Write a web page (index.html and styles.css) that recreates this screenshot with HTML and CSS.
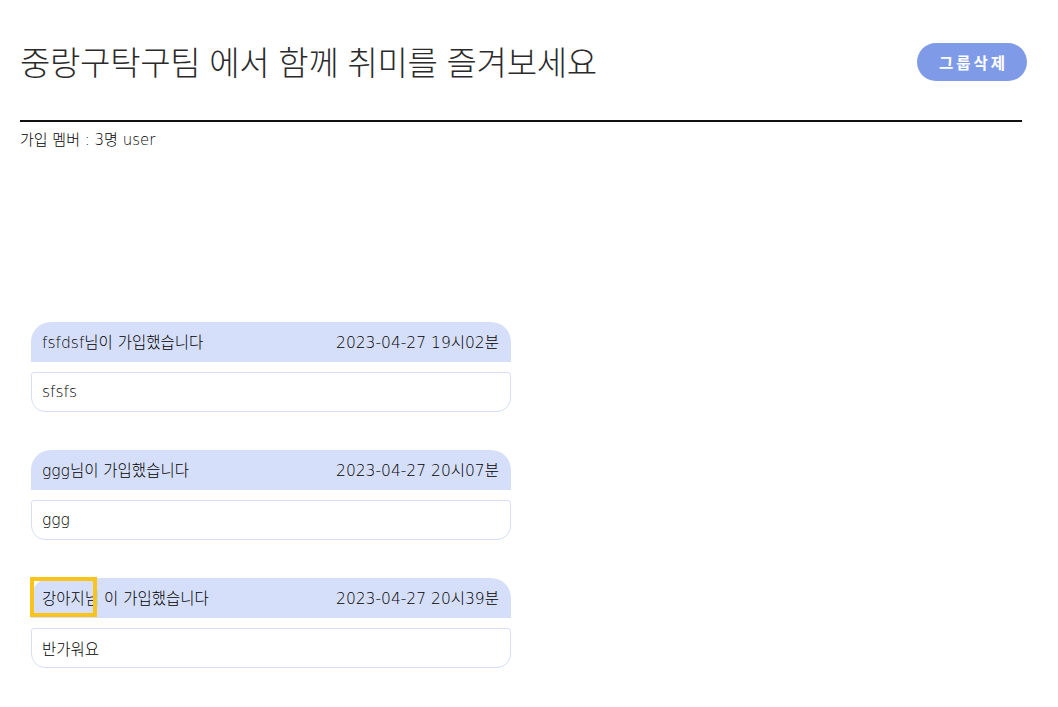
FILE: index.html
```html
<!DOCTYPE html>
<html lang="ko">
<head>
<meta charset="utf-8">
<link rel="stylesheet" href="styles.css">
</head>
<body>
<div class="page">
  <header class="top">
    <h1 class="title">중랑구탁구팀 에서 함께 취미를 즐겨보세요</h1>
    <button class="delete-btn">그룹삭제</button>
  </header>
  <div class="rule"></div>
  <p class="members">가입 멤버 : 3명 user</p>

  <section class="feed">
    <article class="card">
      <div class="card-head"><span class="who">fsfdsf님이 가입했습니다</span><span class="when">2023-04-27 19시02분</span></div>
      <div class="card-body">sfsfs</div>
    </article>
    <article class="card">
      <div class="card-head"><span class="who">ggg님이 가입했습니다</span><span class="when">2023-04-27 20시07분</span></div>
      <div class="card-body">ggg</div>
    </article>
    <article class="card">
      <div class="card-head"><span class="who"><span class="hl">강아지님</span> 이 가입했습니다</span><span class="when">2023-04-27 20시39분</span></div>
      <div class="card-body">반가워요</div>
    </article>
  </section>
</div>
</body>
</html>
```

FILE: styles.css
```css
*, *::before, *::after { box-sizing: border-box; }
html, body { margin: 0; padding: 0; background: #fff; }
body {
  font-family: "DejaVu Sans", "Noto Sans CJK KR", sans-serif;
  color: #000;
}
.page { padding: 0 36px 0 20px; }
.top {
  display: flex;
  justify-content: space-between;
  align-items: flex-start;
  padding-top: 38px;
  height: 100px;
}
.title {
  margin: 0;
  font-family: "Noto Sans CJK KR", sans-serif;
  font-size: 33px;
  font-weight: 300;
  line-height: 46px;
  color: #2a2a2a;
  letter-spacing: -0.3px;
}
.delete-btn {
  margin-top: 5px;
  margin-right: -5px;
  width: 110px;
  height: 38px;
  border: none;
  border-radius: 19px;
  background: #7f9be8;
  color: #fff;
  font-family: "Noto Sans CJK KR", sans-serif;
  font-weight: 700;
  font-size: 15.5px;
  letter-spacing: 3px;
  padding: 0 0 0 3px;
}
.rule {
  margin-top: 20px;
  height: 2px;
  background: #111;
}
.members {
  margin: 8px 0 0;
  font-size: 15px;
  line-height: 20px;
  color: #000;
  font-weight: 300;
}
.feed {
  margin-top: 172px;
  padding-left: 11px;
  display: flex;
  flex-direction: column;
  gap: 38px;
}
.card { width: 480px; }
.card-head {
  position: relative;
  height: 40px;
  background: #d6dffa;
  border-radius: 20px 20px 0 0;
  display: flex;
  align-items: center;
  justify-content: space-between;
  padding: 0 12px 3px 11px;
  font-size: 15.5px;
  font-weight: 300;
  color: #000;
}
.card-body {
  margin-top: 10px;
  height: 40px;
  border: 1px solid #d6dffa;
  border-radius: 3px 3px 14px 14px;
  display: flex;
  align-items: center;
  padding-left: 10px;
  font-size: 15.5px;
  font-weight: 300;
  color: #000;
}
.hl::after {
  content: "";
  position: absolute;
  left: -1px;
  top: -1px;
  width: 67px;
  height: 40px;
  border: 4px solid #fbc41a;
}
```
